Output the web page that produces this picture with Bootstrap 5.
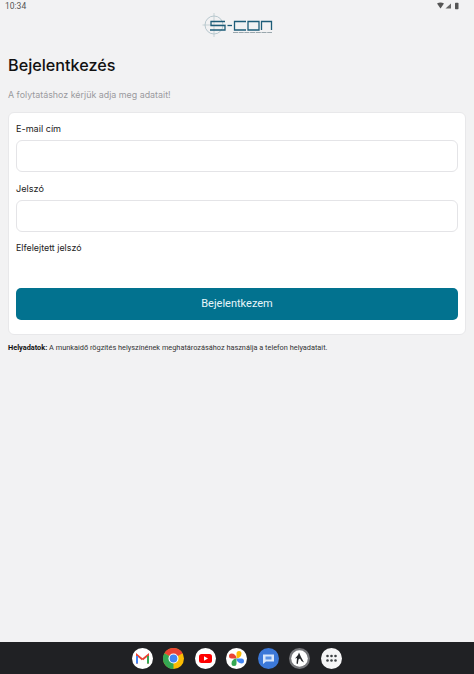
<!DOCTYPE html>
<html lang="hu">
<head>
  <meta charset="UTF-8" />
  <meta name="viewport" content="width=device-width, initial-scale=1.0"/>
  <title>Bejelentkezés</title>
  <link href="https://cdn.jsdelivr.net/npm/bootstrap@5.3.0/dist/css/bootstrap.min.css" rel="stylesheet"/>
  <style>
    html, body { height: 100%; }
    body { background: #f2f2f3; font-family: Inter, "Liberation Sans", sans-serif; color: #111; overflow: hidden; }
    .screen { height: 674px; }
    .status-row { height: 12px; padding: 0 13px 0 5px; font: 8.5px/12px Roboto, sans-serif; color: #555; }
    .logo-row { height: 26px; }
    .page-title { font-size: 16.2px; font-weight: 500; line-height: 24px; margin: 15px 0 0 8px; color: #111; }
    .page-sub { font-size: 8.9px; line-height: 14px; color: #9a9a9e; margin: 11px 0 0 8px; }
    .login-box { margin: 10px 8px 0; padding: 10px 7px 14px; background: #fff; border: 1px solid #e8e8ea; border-radius: 6px; }
    .field-label { display: block; font-size: 9.1px; font-weight: 400; line-height: 12px; color: #222; margin-bottom: 5px; }
    .field-label-next { margin-top: 11px; }
    .field-input { height: 32px; border: 1px solid #e4e4e7; border-radius: 6px; background: #fff; }
    .forgot-link { font-size: 8.9px; font-weight: 400; line-height: 12px; color: #222; margin-top: 10px; }
    .login-btn { height: 32px; margin-top: 34px; background: #02728f; border: 0; border-radius: 5px; color: #e6f6fb; font: 400 11px/32px Roboto, sans-serif; padding: 0; }
    .location-note { font: 7.35px/12px Roboto, sans-serif; color: #333; margin: 7px 0 0 8px; }
    .location-note strong { color: #111; font-weight: 700; }
    .dock { height: 32px; background: #202124; gap: 10.5px; padding-right: 1px; }
    .dock-icon { width: 21px; height: 21px; flex: none; display: block; }
  </style>
</head>
<body>
  <div class="screen d-flex flex-column">
    <!-- Status bar -->
    <div class="status-row d-flex justify-content-between align-items-center">
      <span>10:34</span>
      <svg width="24" height="8" viewBox="0 0 24 8">
        <path d="M0 1.500 Q3.500 -.5 7 1.500 L3.500 6.500Z" fill="#555"/>
        <path d="M8.500 6.500 L14 1.500 V6.500Z" fill="#666"/>
        <rect x="18" y=".8" width="3.500" height="6.400" rx=".6" fill="#555"/>
      </svg>
    </div>

    <!-- Logo -->
    <div class="logo-row d-flex justify-content-center">
      <svg width="72" height="26" viewBox="0 0 72 26">
        <circle cx="13" cy="13" r="9" fill="none" stroke="#9db4bd" stroke-width=".7"/>
        <path d="M13 1V25M1.500 13H25" stroke="#a9bcc4" stroke-width=".6"/>
        <path d="M24 9.500H10V13.500H24V18H9" fill="none" stroke="#1d5c78" stroke-width="1.300"/>
        <path d="M26.500 13.500H31" stroke="#1d5c78" stroke-width="1.300"/>
        <path d="M45 9.500H33.500V18H45" fill="none" stroke="#1d5c78" stroke-width="1.300"/>
        <path d="M47 9.500H58V18H47Z" fill="none" stroke="#1d5c78" stroke-width="1.300"/>
        <path d="M60.500 18V9.500H70.500V18" fill="none" stroke="#1d5c78" stroke-width="1.300"/>
        <path d="M32 20.500H71" stroke="#9aa7ad" stroke-width="1" stroke-dasharray="5 .7"/>
      </svg>
    </div>

    <main class="flex-grow-1">
      <h1 class="page-title">Bejelentkezés</h1>
      <p class="page-sub">A folytatáshoz kérjük adja meg adatait!</p>

      <form class="login-box d-flex flex-column">
        <label class="field-label" for="email">E-mail cím</label>
        <input class="field-input form-control" type="email" id="email" />
        <label class="field-label field-label-next" for="password">Jelszó</label>
        <input class="field-input form-control" type="password" id="password" />
        <div class="forgot-link">Elfelejtett jelszó</div>
        <button type="button" class="login-btn btn">Bejelentkezem</button>
      </form>

      <p class="location-note"><strong>Helyadatok:</strong> A munkaidő rögzítés helyszínének meghatározásához használja a telefon helyadatait.</p>
    </main>

    <!-- App dock -->
    <div class="dock d-flex justify-content-center align-items-center">
      <svg class="dock-icon" viewBox="0 0 21 21">
        <circle cx="10.500" cy="10.500" r="10.500" fill="#fff"/>
        <path d="M5 15.500V7L10.500 11.500" fill="none" stroke="#ea4335" stroke-width="2"/>
        <path d="M16 15.500V7L10.500 11.500" fill="none" stroke="#ea4335" stroke-width="2"/>
        <path d="M5 15.500V8" stroke="#4285f4" stroke-width="2"/>
        <path d="M16 15.500V8" stroke="#34a853" stroke-width="2"/>
      </svg>
      <svg class="dock-icon" viewBox="0 0 21 21">
        <circle cx="10.500" cy="10.500" r="10.500" fill="#fbbc04"/>
        <path d="M10.500 10.500L1.400 5.250A10.500 10.500 0 0 1 19.600 5.250Z" fill="#ea4335"/>
        <path d="M10.500 10.500L1.400 5.250A10.500 10.500 0 0 0 10.500 21Z" fill="#34a853"/>
        <circle cx="10.500" cy="10.500" r="5" fill="#fff"/>
        <circle cx="10.500" cy="10.500" r="3.900" fill="#4285f4"/>
      </svg>
      <svg class="dock-icon" viewBox="0 0 21 21">
        <circle cx="10.500" cy="10.500" r="10.500" fill="#fff"/>
        <rect x="4" y="6" width="13" height="9" rx="2.500" fill="#f00"/>
        <path d="M9 8.300L13 10.500L9 12.700Z" fill="#fff"/>
      </svg>
      <svg class="dock-icon" viewBox="0 0 21 21">
        <circle cx="10.500" cy="10.500" r="10.500" fill="#fff"/>
        <path d="M10.500 10.500H5.500A2.500 2.500 0 0 1 5.500 5.500A5 5 0 0 1 10.500 10.500Z" fill="#ea4335"/>
        <path d="M10.500 10.500V5.500A2.500 2.500 0 0 1 15.500 5.500A5 5 0 0 1 10.500 10.500Z" fill="#fbbc04"/>
        <path d="M10.500 10.500H15.500A2.500 2.500 0 0 1 15.500 15.500A5 5 0 0 1 10.500 10.500Z" fill="#4285f4"/>
        <path d="M10.500 10.500V15.500A2.500 2.500 0 0 1 5.500 15.500A5 5 0 0 1 10.500 10.500Z" fill="#34a853"/>
      </svg>
      <svg class="dock-icon" viewBox="0 0 21 21">
        <circle cx="10.500" cy="10.500" r="10.500" fill="#3b78d8"/>
        <path d="M5 6.500H16V13.500H8L5 16Z" fill="#d7e6fb"/>
        <rect x="7.500" y="8.500" width="6" height="3" fill="#5b93e6"/>
      </svg>
      <svg class="dock-icon" viewBox="0 0 21 21">
        <circle cx="10.500" cy="10.500" r="10.500" fill="#77787c"/>
        <circle cx="10.500" cy="10.500" r="8.300" fill="#fff"/>
        <path d="M10 4.500L12 9L15 14.500L12.500 13L11 10.500L9.500 11.500L8.800 16L7.500 15.500L8 10L6 10.500L9 7Z" fill="#26282c"/>
      </svg>
      <svg class="dock-icon" viewBox="0 0 21 21">
        <circle cx="10.500" cy="10.500" r="10.500" fill="#f5f5f6"/>
        <g fill="#3c4043">
          <circle cx="6.500" cy="8" r="1.300"/><circle cx="10.500" cy="8" r="1.300"/><circle cx="14.500" cy="8" r="1.300"/>
          <circle cx="6.500" cy="12.500" r="1.300"/><circle cx="10.500" cy="12.500" r="1.300"/><circle cx="14.500" cy="12.500" r="1.300"/>
        </g>
      </svg>
    </div>
  </div>
  <script src="https://cdn.jsdelivr.net/npm/bootstrap@5.3.0/dist/js/bootstrap.bundle.min.js"></script>
</body>
</html>
